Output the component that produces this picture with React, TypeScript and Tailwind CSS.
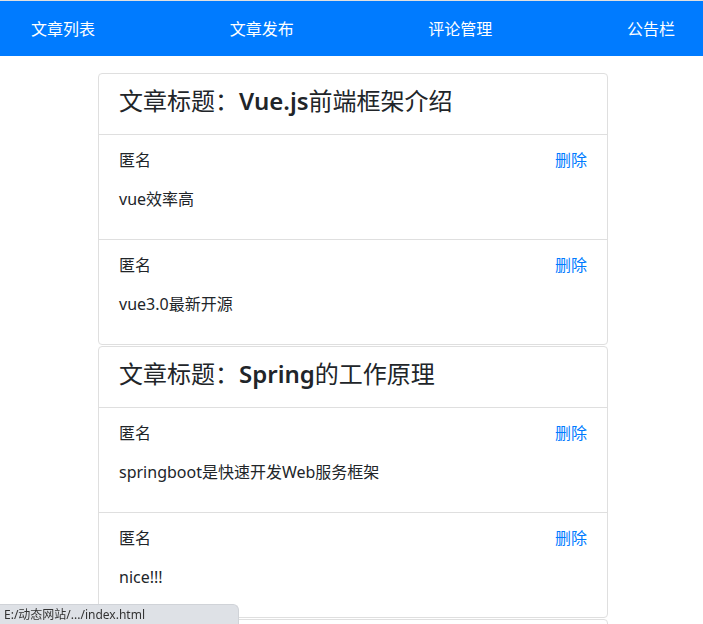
import React from 'react';

type Comment = { name: string; content: string };
type Article = { title: string; comments: Comment[] };

const articles: Article[] = [
  { title: 'Vue.js前端框架介绍', comments: [
    { name: '匿名', content: 'vue效率高' },
    { name: '匿名', content: 'vue3.0最新开源' },
  ] },
  { title: 'Spring的工作原理', comments: [
    { name: '匿名', content: 'springboot是快速开发Web服务框架' },
    { name: '匿名', content: 'nice!!!' },
  ] },
];

const font = { fontFamily: '"Noto Sans", "Noto Sans CJK SC", sans-serif' };

// latin runs of the title look semibold, CJK stays regular
function Title({ text }: { text: string }) {
  const parts = text.split(/([A-Za-z0-9.]+)/).filter(Boolean);
  return (
    <>
      {parts.map((p, i) =>
        /^[A-Za-z0-9.]+$/.test(p)
          ? <span key={i} className="font-semibold">{p}</span>
          : <span key={i}>{p}</span>
      )}
    </>
  );
}

function ArticleCard({ a }: { a: Article }) {
  return (
    <div className="w-[510px] ml-[98px] border border-[#dfdfdf] rounded-[4px] bg-white">
      <div className="px-5 pt-[12px] pb-[19px] border-b border-[#dfdfdf]">
        <h3 className="h-[29px] leading-[29px] text-[24px] font-normal text-[#212529]">
          文章标题：<Title text={a.title} />
        </h3>
      </div>
      {a.comments.map((c, i) => (
        <div key={i} className={`px-5 pt-[13px] pb-[28px] ${i < a.comments.length - 1 ? 'border-b border-[#dfdfdf]' : ''}`}>
          <div className="flex justify-between h-6 leading-6 text-[16px] text-[#212529]">
            <span>{c.name}</span>
            <a href="#" className="text-[#007bff]">删除</a>
          </div>
          <p className="mt-[15px] h-6 leading-6 text-[16px] text-[#212529]">{c.content}</p>
        </div>
      ))}
    </div>
  );
}

export default function App() {
  return (
    <div className="h-screen bg-white overflow-hidden" style={font}>
      <div className="border-t border-[#e0e0e0]">
        <nav className="h-[55px] bg-[#007bff] flex items-center justify-between pl-[31px] pr-[28px] text-white text-[16px]">
          <a href="#">文章列表</a>
          <a href="#">文章发布</a>
          <a href="#">评论管理</a>
          <a href="#">公告栏</a>
        </nav>
      </div>
      <main className="pt-[17px] flex flex-col gap-[1px]">
        {articles.map((a, i) => <ArticleCard key={i} a={a} />)}
        {/* next card, only its top edge is on screen */}
        <div className="w-[510px] ml-[98px] h-[60px] shrink-0 border border-[#dfdfdf] rounded-[4px] bg-white" />
      </main>
      <div className="fixed left-0 bottom-0 w-[239px] h-[20px] bg-[#dee1e6] border-t border-r border-[#d0d3d8] rounded-tr-[6px] pl-[4px] text-[12px] leading-[19px] text-[#333]">
        E:/动态网站/.../index.html
      </div>
    </div>
  );
}
